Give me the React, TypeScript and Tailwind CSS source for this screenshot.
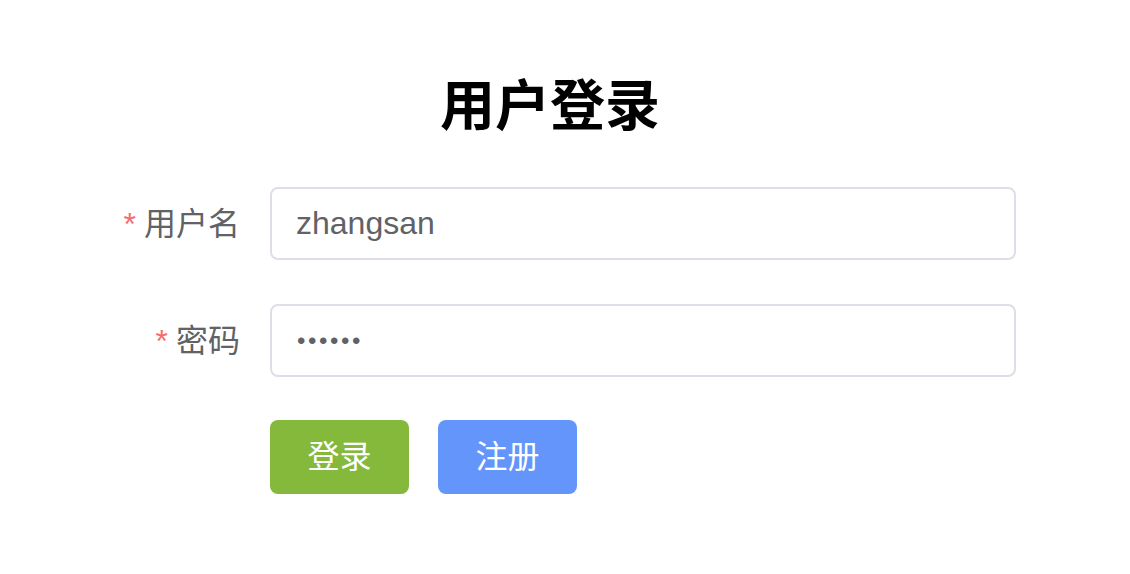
import { useState } from "react";

const font = { fontFamily: '"Liberation Sans", "Noto Sans CJK SC", sans-serif' };

const App = () => {
  const [username, setUsername] = useState("zhangsan");
  const [password, setPassword] = useState("123456");

  return (
    <div className="w-[1130px] h-[574px] bg-white overflow-hidden" style={font}>
      <div className="w-[1100px] pt-[68px]">
        <h1 className="text-center text-[55px] leading-[77px] font-bold text-black">用户登录</h1>

        <form className="mt-[42px] flex flex-col gap-[44px]" onSubmit={(e) => e.preventDefault()}>
          {/* 用户名 */}
          <div className="flex items-center">
            <label className="w-[270px] pr-[30px] text-right text-[32px] text-[#606266]">
              <span className="text-[#f56c6c] mr-[8px]">*</span>用户名
            </label>
            <input
              value={username}
              onChange={(e) => setUsername(e.target.value)}
              className="w-[746px] h-[73px] border-2 border-[#dcdfe6] rounded-[8px] pl-[24px] text-[32px] text-[#606266] outline-none"
            />
          </div>

          {/* 密码 */}
          <div className="flex items-center">
            <label className="w-[270px] pr-[30px] text-right text-[32px] text-[#606266]">
              <span className="text-[#f56c6c] mr-[8px]">*</span>密码
            </label>
            <input
              type="password"
              value={password}
              onChange={(e) => setPassword(e.target.value)}
              className="w-[746px] h-[73px] border-2 border-[#dcdfe6] rounded-[8px] pl-[25px] text-[24px] tracking-[2.6px] text-[#606266] outline-none"
            />
          </div>

          <div className="flex items-center gap-[29px] pl-[270px] -mt-[1px]">
            <button className="w-[139px] h-[74px] rounded-[8px] bg-[#85b93b] text-white text-[32px]">登录</button>
            <button className="w-[139px] h-[74px] rounded-[8px] bg-[#6495fb] text-white text-[32px]">注册</button>
          </div>
        </form>
      </div>
    </div>
  );
};

export default App;
